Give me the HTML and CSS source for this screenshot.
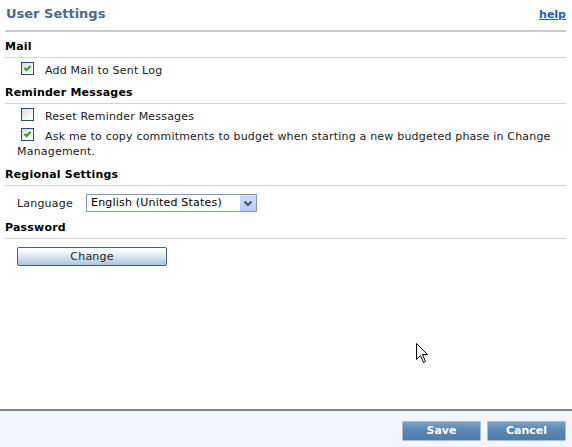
FILE: index.html
```html
<!DOCTYPE html>
<html lang="en">
<head>
<meta charset="utf-8">
<title>User Settings</title>
<link rel="stylesheet" href="styles.css">
</head>
<body>
<div class="app">
  <div class="main">
    <div class="titlebar">
      <h1 class="title">User Settings</h1>
      <a class="help" href="#">help</a>
    </div>

    <div class="sec-head">Mail</div>
    <div class="opt"><span class="cb"><svg viewBox="0 0 11 11" width="11" height="11"><path d="M2.5 5 L4.5 7 L8.5 3" fill="none" stroke="#21a121" stroke-width="2"/></svg></span>Add Mail to Sent Log</div>

    <div class="sec-head">Reminder Messages</div>
    <div class="opt"><span class="cb"></span>Reset Reminder Messages</div>
    <div class="opt opt-last"><span class="cb"><svg viewBox="0 0 11 11" width="11" height="11"><path d="M2.5 5 L4.5 7 L8.5 3" fill="none" stroke="#21a121" stroke-width="2"/></svg></span>Ask me to copy commitments to budget when starting a new budgeted phase in Change Management.</div>

    <div class="sec-head">Regional Settings</div>
    <div class="field-row">
      <span class="field-label">Language</span>
      <div class="select">
        <span class="select-value">English (United States)</span>
        <span class="select-arrow"><svg viewBox="0 0 16 16" width="16" height="16"><path d="M4.5 6.5 L8 10 L11.5 6.5" fill="none" stroke="#3d5378" stroke-width="2"/></svg></span>
      </div>
    </div>

    <div class="sec-head">Password</div>
    <div class="btn-row">
      <button class="btn-change" type="button">Change</button>
    </div>
  </div>

  <div class="footer">
    <button class="btn-primary" type="button">Save</button>
    <button class="btn-primary" type="button">Cancel</button>
  </div>

  <svg class="cursor" viewBox="0 0 13 21" width="13" height="21"><path d="M0.5 0.5 L0.5 16.5 L4.5 12.5 L7.5 19.5 L9.5 18.5 L6.5 11.5 L11.5 11.5 Z" fill="#fff" stroke="#000" stroke-width="1" stroke-linejoin="miter"/></svg>
</div>
</body>
</html>
```

FILE: styles.css
```css
* { box-sizing: border-box; }

html, body {
  margin: 0;
  padding: 0;
  background: #fff;
}

body {
  font-family: "DejaVu Sans", Verdana, sans-serif;
  font-size: 11px;
  letter-spacing: 0.2px;
  color: #1a1a1a;
}

.app {
  position: relative;
  width: 572px;
  height: 447px;
  display: flex;
  flex-direction: column;
  overflow: hidden;
}

.main {
  flex: 1 1 auto;
  padding: 0 6px 0 5px;
}

.titlebar {
  height: 32px;
  padding-top: 6px;
  display: flex;
  align-items: baseline;
  justify-content: space-between;
  border-bottom: 2px solid #cbcbcb;
}

.title {
  margin: 0;
  padding-left: 1px;
  font-family: "DejaVu Sans", Verdana, sans-serif;
  font-weight: bold;
  font-size: 13px;
  letter-spacing: 0;
  line-height: 16px;
  color: #4c6a8b;
}

.help {
  font-weight: bold;
  font-size: 11px;
  letter-spacing: 0;
  line-height: 13px;
  color: #1462c8;
  text-decoration: underline;
}

.sec-head {
  padding: 8px 0 4px 0;
  line-height: 13px;
  font-weight: bold;
  font-size: 11px;
  color: #000;
  border-bottom: 1px solid #d3d3d3;
}

.opt {
  padding: 5px 0 0 12px;
  line-height: 15px;
  min-height: 20px;
}

.opt-last {
  padding-bottom: 1px;
}

.cb {
  display: inline-block;
  width: 13px;
  height: 13px;
  margin: -2px 11px 0 4px;
  border: 1px solid #1c5180;
  background: linear-gradient(135deg, #dcdcd6 0%, #f4f4f0 60%, #ffffff 100%);
  vertical-align: -1px;
  overflow: hidden;
}

.cb svg {
  display: block;
}

.field-row {
  display: flex;
  align-items: center;
  padding: 8px 0 1px 12px;
}

.field-label {
  width: 69px;
  line-height: 15px;
}

.select {
  width: 171px;
  height: 18px;
  border: 1px solid #7f9db9;
  background: #fff;
  display: flex;
  align-items: center;
}

.select-value {
  flex: 1 1 auto;
  padding-left: 4px;
  line-height: 16px;
  color: #000;
}

.select-arrow {
  width: 16px;
  height: 16px;
  background: linear-gradient(180deg, #cddcfc 0%, #b7cbf5 100%);
  border-radius: 1px;
}

.select-arrow svg {
  display: block;
}

.btn-row {
  padding: 8px 0 0 12px;
}

.btn-change {
  width: 150px;
  height: 19px;
  margin: 0;
  padding: 0;
  border: 1px solid #3c6586;
  border-radius: 2px;
  background: linear-gradient(180deg, #ffffff 0%, #e9f1f8 35%, #a9c5dd 100%);
  font-family: "DejaVu Sans", Verdana, sans-serif;
  font-size: 11px;
  letter-spacing: 0.2px;
  color: #222;
  line-height: 15px;
}

.footer {
  flex: 0 0 38px;
  border-top: 2px solid #6d86a1;
  background: #f2f5fb;
  display: flex;
  justify-content: flex-end;
  align-items: flex-start;
  gap: 6px;
  padding: 10px 6px 0 0;
}

.btn-primary {
  width: 79px;
  height: 20px;
  margin: 0;
  padding: 0;
  border: 1px solid #a8bfd6;
  border-radius: 1px;
  background: linear-gradient(180deg, #7ba2c8 0%, #5c88b4 40%, #4f7ca8 100%);
  font-family: "DejaVu Sans", Verdana, sans-serif;
  font-weight: bold;
  font-size: 11px;
  letter-spacing: 0;
  line-height: 16px;
  color: #fff;
}

.cursor {
  position: absolute;
  left: 416px;
  top: 343px;
}
```
